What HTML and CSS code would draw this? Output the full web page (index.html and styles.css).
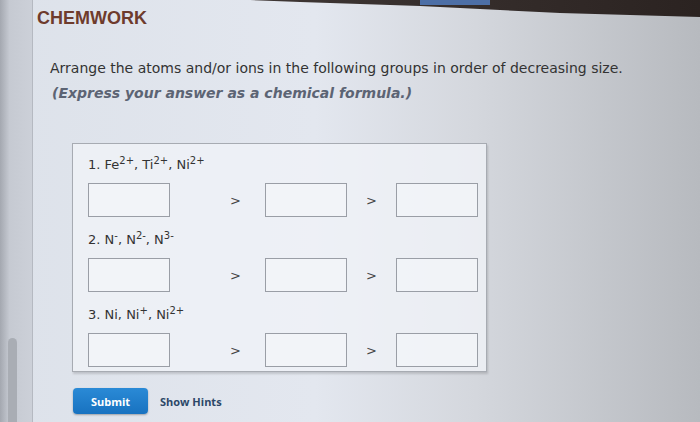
FILE: index.html
```html
<!DOCTYPE html>
<html>
<head>
<meta charset="utf-8">
<link rel="stylesheet" href="styles.css">
</head>
<body>
<div class="screen">
  <div class="bezel"><span class="tab"></span></div>
  <div class="main">
    <div class="leftrail"><div class="scroll"></div></div>
    <div class="content">
      <h1 class="brand">CHEMWORK</h1>
      <p class="prompt">Arrange the atoms and/or ions in the following groups in order of decreasing size.</p>
      <p class="hint">(Express your answer as a chemical formula.)</p>
      <div class="card">
        <div class="group">
          <div class="label">1. Fe<sup>2+</sup>, Ti<sup>2+</sup>, Ni<sup>2+</sup></div>
          <div class="answers">
            <div class="field"></div><div class="gt gt-first">&gt;</div><div class="field"></div><div class="gt">&gt;</div><div class="field"></div>
          </div>
        </div>
        <div class="group">
          <div class="label">2. N<sup>-</sup>, N<sup>2-</sup>, N<sup>3-</sup></div>
          <div class="answers">
            <div class="field"></div><div class="gt gt-first">&gt;</div><div class="field"></div><div class="gt">&gt;</div><div class="field"></div>
          </div>
        </div>
        <div class="group">
          <div class="label">3. Ni, Ni<sup>+</sup>, Ni<sup>2+</sup></div>
          <div class="answers">
            <div class="field"></div><div class="gt gt-first">&gt;</div><div class="field"></div><div class="gt">&gt;</div><div class="field"></div>
          </div>
        </div>
      </div>
      <div class="actions">
        <button class="submit">Submit</button>
        <span class="show-hints">Show Hints</span>
      </div>
    </div>
  </div>
</div>
</body>
</html>
```
FILE: styles.css
```css
html, body {
  margin: 0;
  padding: 0;
}
body {
  width: 700px;
  height: 422px;
  overflow: hidden;
  background: #d9dde4;
  font-family: "DejaVu Sans", Verdana, sans-serif;
}
.screen {
  position: relative;
  width: 700px;
  height: 422px;
  display: flex;
  flex-direction: column;
  background: linear-gradient(90deg, #dde2ea 0%, #e3e7ef 45%, #d4d7dd 68%, #b7babf 100%);
}
.bezel {
  position: absolute;
  left: 0;
  top: 0;
  width: 700px;
  height: 17px;
  background: linear-gradient(90deg, #4a4240 0%, #3a3230 50%, #2b2321 100%);
  clip-path: polygon(250px 0, 700px 0, 700px 17px, 560px 13px, 420px 6px, 300px 2px);
}
.tab {
  position: absolute;
  left: 420px;
  top: 0;
  width: 70px;
  height: 5px;
  background: #4d6fa6;
}
.main {
  flex: 1;
  display: flex;
}
.leftrail {
  width: 33px;
  background: linear-gradient(90deg, #a4a8b0 0%, #c6cad2 30%, #ccd0d8 100%);
  border-right: 1px solid #b5b9c1;
  display: flex;
  padding-left: 8px;
  box-sizing: border-box;
}
.scroll {
  width: 9px;
  margin-top: 338px;
  background: #a9adb4;
  border-radius: 5px 5px 0 0;
}
.content {
  flex: 1;
  padding-left: 4px;
  display: flex;
  flex-direction: column;
}
.brand {
  margin: 6px 0 0 0;
  font-family: "Liberation Sans", Arial, sans-serif;
  font-weight: bold;
  font-size: 18px;
  line-height: 24px;
  color: #6e3b2c;
}
.prompt {
  margin: 29px 0 0 13px;
  font-size: 14px;
  line-height: 18px;
  color: #333;
}
.hint {
  margin: 7px 0 0 15px;
  font-size: 14px;
  line-height: 18px;
  font-weight: bold;
  font-style: italic;
  color: #5c6474;
}
.card {
  margin: 41px 0 0 35px;
  width: 415px;
  height: 229px;
  box-sizing: border-box;
  background: rgba(240, 243, 247, 0.8);
  border: 1px solid #a7abb2;
  box-shadow: 1px 2px 2px rgba(0,0,0,0.15);
  padding: 12px 0 0 15px;
  display: flex;
  flex-direction: column;
  gap: 14px;
}
.group {
  display: flex;
  flex-direction: column;
}
.label {
  font-size: 13px;
  line-height: 18px;
  color: #333;
}
.label sup {
  font-size: 10px;
  line-height: 0;
  vertical-align: 5px;
}
.answers {
  margin-top: 9px;
  display: flex;
  align-items: center;
  height: 34px;
}
.field {
  width: 80px;
  height: 32px;
  border: 1px solid #9a9ea6;
  background: rgba(245, 247, 250, 0.6);
}
.gt {
  width: 49px;
  text-align: center;
  font-size: 13px;
  color: #444;
}
.gt-first {
  width: 95px;
  text-align: right;
  padding-right: 24px;
  box-sizing: border-box;
}
.actions {
  margin: 16px 0 0 36px;
  display: flex;
  align-items: center;
  gap: 12px;
}
.submit {
  width: 75px;
  height: 26px;
  border: none;
  border-radius: 4px;
  background: linear-gradient(180deg, #2a8ad6 0%, #1872c0 100%);
  color: #fff;
  font-family: "Open Sans", "Liberation Sans", sans-serif;
  font-weight: bold;
  font-size: 11px;
  box-shadow: 0 1px 2px rgba(0,0,0,0.3);
}
.show-hints {
  font-family: "Open Sans", "Liberation Sans", sans-serif;
  font-weight: bold;
  font-size: 11px;
  color: #2c4868;
}
```
